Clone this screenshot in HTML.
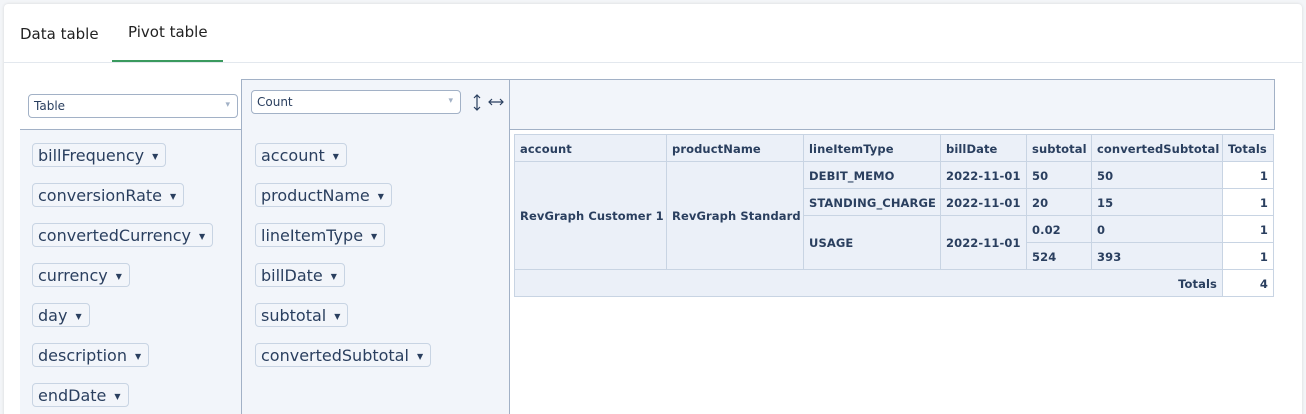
<!DOCTYPE html>
<html><head><meta charset="utf-8"><style>
*{box-sizing:border-box;margin:0;padding:0}
html,body{width:1306px;height:414px;overflow:hidden}
body{background:#f3f5f8;font-family:"DejaVu Sans",Verdana,sans-serif;color:#2a3f5f;position:relative}
.card{position:absolute;left:4px;top:4px;width:1298px;height:420px;background:#fff;border-radius:4px;box-shadow:0 0 3px rgba(0,0,0,.12)}
.tabs{position:absolute;left:0;top:0;width:1298px;height:59px;border-bottom:1px solid #e3e8ee}
.tab{position:absolute;top:20px;font-family:"DejaVu Sans",sans-serif;font-size:15px;color:#222}
.ul{position:absolute;left:108px;top:56px;width:111px;height:2px;background:#3a9a5e}
.abs{position:absolute}
.sel{position:absolute;background:#fff;border:1px solid #a2b1c6;border-radius:4px;font-size:12px;padding:4px 5px;color:#2a3f5f}
.sel:after{content:"▾";position:absolute;right:7px;top:5px;font-size:9px;color:#a2b1c6}
.pill{position:absolute;height:24px;border:1px solid #c8d4e3;border-radius:4px;background:#f2f5fa;font-size:16px;padding:1px 5px 0 5px;line-height:21px;white-space:nowrap}
.pill span{font-size:8px;margin-left:8px;margin-right:2px;vertical-align:2px}
.cell{position:absolute;background:#ebf0f8;border:1px solid #c8d4e3;font-size:11.5px;letter-spacing:0.1px;font-weight:bold;padding:1px 5px 0;display:flex;align-items:center;white-space:nowrap;overflow:hidden}
.w{background:#fff;justify-content:flex-end}
</style></head><body>
<div class="card">
<div class="tabs"><div class="tab" style="left:16px;top:21px">Data table</div><div class="tab" style="left:124px;top:19px">Pivot table</div><div class="ul"></div></div>
</div>
<div class="abs" style="left:20px;top:80px;width:222px;height:50px;background:#fff;border-bottom:1px solid #a2b1c6"></div>
<div class="abs" style="left:241px;top:79px;width:269px;height:51px;background:#f2f5fa;border:1px solid #a2b1c6"></div>
<div class="abs" style="left:509px;top:79px;width:766px;height:51px;background:#f2f5fa;border:1px solid #a2b1c6"></div>
<div class="abs" style="left:20px;top:130px;width:222px;height:290px;background:#f2f5fa"></div>
<div class="abs" style="left:241px;top:129px;width:269px;height:290px;background:#f2f5fa;border-left:1px solid #a2b1c6;border-right:1px solid #a2b1c6"></div>
<div class="sel" style="left:28px;top:94px;width:210px;height:24px">Table</div>
<div class="sel" style="left:251px;top:90px;width:210px;height:24px">Count</div>
<svg class="abs" style="left:470px;top:93px" width="36" height="20"><g stroke="#2a3f5f" stroke-width="1.2" fill="none"><path d="M7 2V17M4 5L7 2L10 5M4 14L7 17L10 14"/><path d="M19 9H33M22 6L19 9L22 12M30 6L33 9L30 12"/></g></svg>
<div class="pill" style="left:32px;top:143px">billFrequency<span>▼</span></div>
<div class="pill" style="left:32px;top:183px">conversionRate<span>▼</span></div>
<div class="pill" style="left:32px;top:223px">convertedCurrency<span>▼</span></div>
<div class="pill" style="left:32px;top:263px">currency<span>▼</span></div>
<div class="pill" style="left:32px;top:303px">day<span>▼</span></div>
<div class="pill" style="left:32px;top:343px">description<span>▼</span></div>
<div class="pill" style="left:32px;top:383px">endDate<span>▼</span></div>
<div class="pill" style="left:255px;top:143px">account<span>▼</span></div>
<div class="pill" style="left:255px;top:183px">productName<span>▼</span></div>
<div class="pill" style="left:255px;top:223px">lineItemType<span>▼</span></div>
<div class="pill" style="left:255px;top:263px">billDate<span>▼</span></div>
<div class="pill" style="left:255px;top:303px">subtotal<span>▼</span></div>
<div class="pill" style="left:255px;top:343px">convertedSubtotal<span>▼</span></div>
<div class="cell" style="left:514px;top:134px;width:153px;height:28px">account</div>
<div class="cell" style="left:666px;top:134px;width:138px;height:28px">productName</div>
<div class="cell" style="left:803px;top:134px;width:138px;height:28px">lineItemType</div>
<div class="cell" style="left:940px;top:134px;width:87px;height:28px">billDate</div>
<div class="cell" style="left:1026px;top:134px;width:66px;height:28px">subtotal</div>
<div class="cell" style="left:1091px;top:134px;width:132px;height:28px">convertedSubtotal</div>
<div class="cell" style="left:1222px;top:134px;width:52px;height:28px">Totals</div>
<div class="cell" style="left:514px;top:161px;width:153px;height:109px">RevGraph Customer 1</div>
<div class="cell" style="left:666px;top:161px;width:138px;height:109px">RevGraph Standard</div>
<div class="cell" style="left:803px;top:161px;width:138px;height:28px">DEBIT_MEMO</div>
<div class="cell" style="left:803px;top:188px;width:138px;height:28px">STANDING_CHARGE</div>
<div class="cell" style="left:803px;top:215px;width:138px;height:55px">USAGE</div>
<div class="cell" style="left:940px;top:161px;width:87px;height:28px">2022-11-01</div>
<div class="cell" style="left:940px;top:188px;width:87px;height:28px">2022-11-01</div>
<div class="cell" style="left:940px;top:215px;width:87px;height:55px">2022-11-01</div>
<div class="cell" style="left:1026px;top:161px;width:66px;height:28px">50</div>
<div class="cell" style="left:1026px;top:188px;width:66px;height:28px">20</div>
<div class="cell" style="left:1026px;top:215px;width:66px;height:28px">0.02</div>
<div class="cell" style="left:1026px;top:242px;width:66px;height:28px">524</div>
<div class="cell" style="left:1091px;top:161px;width:132px;height:28px">50</div>
<div class="cell" style="left:1091px;top:188px;width:132px;height:28px">15</div>
<div class="cell" style="left:1091px;top:215px;width:132px;height:28px">0</div>
<div class="cell" style="left:1091px;top:242px;width:132px;height:28px">393</div>
<div class="cell w" style="left:1222px;top:161px;width:52px;height:28px">1</div>
<div class="cell w" style="left:1222px;top:188px;width:52px;height:28px">1</div>
<div class="cell w" style="left:1222px;top:215px;width:52px;height:28px">1</div>
<div class="cell w" style="left:1222px;top:242px;width:52px;height:28px">1</div>
<div class="cell" style="left:514px;top:269px;width:709px;height:28px;justify-content:flex-end">Totals</div>
<div class="cell w" style="left:1222px;top:269px;width:52px;height:28px">4</div>
</body></html>
